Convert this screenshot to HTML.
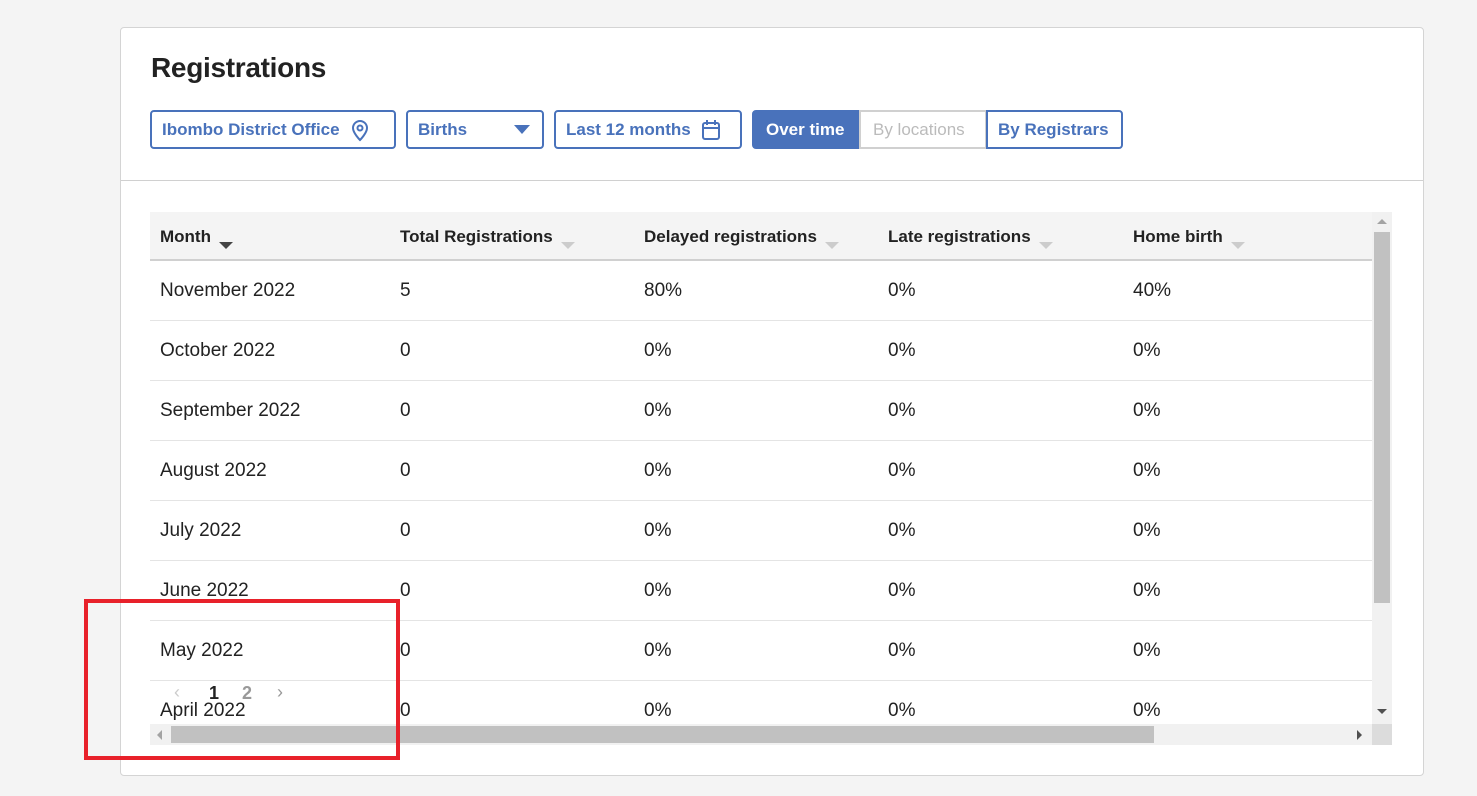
<!DOCTYPE html>
<html><head><style>
*{box-sizing:border-box;margin:0;padding:0}
body{width:1477px;height:796px;background:#f4f4f4;font-family:"Liberation Sans",sans-serif;color:#222;position:relative;overflow:hidden}
.card{position:absolute;left:120px;top:27px;width:1304px;height:749px;background:#fff;border:1px solid #d4d4d4;border-radius:4px}
h1{position:absolute;left:151px;top:52px;font-size:28px;font-weight:bold;color:#222;letter-spacing:-0.3px}
.btn{position:absolute;top:110px;height:39px;border:2px solid #4972bb;border-radius:4px;color:#4972bb;font-size:17px;font-weight:bold;display:flex;align-items:center;padding-left:10px}
.div{position:absolute;left:121px;top:180px;width:1302px;height:1px;background:#d0d0d0}
.tbl{position:absolute;left:150px;top:212px;width:1222px;height:512px;overflow:hidden}
.hdr{height:49px;background:#f4f4f4;border-bottom:2px solid #d0d0d0;position:relative}
.hdr span{position:absolute;top:15px;font-size:17px;font-weight:bold;color:#222}
.tri{display:inline-block;width:0;height:0;border-left:7px solid transparent;border-right:7px solid transparent;border-top:7px solid #ccc;margin-left:8px;vertical-align:middle}
.row{height:60px;border-bottom:1px solid #e4e4e4;position:relative}
.row span{position:absolute;top:19px;font-size:19px;color:#222}
</style></head><body>
<div class="card"></div>
<h1>Registrations</h1>
<div class="btn" style="left:150px;width:246px">Ibombo District Office
<svg width="22" height="24" viewBox="0 0 22 24" style="margin-left:9px"><path d="M11 22s7-7 7-12a7 7 0 0 0-14 0c0 5 7 12 7 12z" fill="none" stroke="#4972bb" stroke-width="2"/><circle cx="11" cy="10" r="2.5" fill="none" stroke="#4972bb" stroke-width="2"/></svg></div>
<div class="btn" style="left:406px;width:138px">Births<span style="position:absolute;right:12px;top:13px;width:0;height:0;border-left:8px solid transparent;border-right:8px solid transparent;border-top:9px solid #4972bb"></span></div>
<div class="btn" style="left:554px;width:188px">Last 12 months
<svg width="20" height="22" viewBox="0 0 20 22" style="margin-left:10px"><rect x="2" y="4" width="16" height="16" rx="2" fill="none" stroke="#4972bb" stroke-width="2"/><path d="M2 9h16M6 1v5M14 1v5" stroke="#4972bb" stroke-width="2"/></svg></div>
<div class="btn" style="left:752px;width:108px;background:#4972bb;color:#fff;border-radius:4px 0 0 4px;padding-left:12px">Over time</div>
<div class="btn" style="left:859px;width:128px;border-color:#d0d0d0;border-radius:0;color:#bbb;padding-left:12px;font-weight:normal">By locations</div>
<div class="btn" style="left:986px;width:137px;border-radius:0 4px 4px 0;padding-left:10px">By Registrars</div>
<div class="div"></div>
<div class="tbl">
<div class="hdr"><span style="left:10px">Month<span class="tri" style="border-top-color:#444"></span></span><span style="left:250px">Total Registrations<span class="tri"></span></span><span style="left:494px">Delayed registrations<span class="tri"></span></span><span style="left:738px">Late registrations<span class="tri"></span></span><span style="left:983px">Home birth<span class="tri"></span></span></div>
<div class="row"><span style="left:10px">November 2022</span><span style="left:250px">5</span><span style="left:494px">80%</span><span style="left:738px">0%</span><span style="left:983px">40%</span></div>
<div class="row"><span style="left:10px">October 2022</span><span style="left:250px">0</span><span style="left:494px">0%</span><span style="left:738px">0%</span><span style="left:983px">0%</span></div>
<div class="row"><span style="left:10px">September 2022</span><span style="left:250px">0</span><span style="left:494px">0%</span><span style="left:738px">0%</span><span style="left:983px">0%</span></div>
<div class="row"><span style="left:10px">August 2022</span><span style="left:250px">0</span><span style="left:494px">0%</span><span style="left:738px">0%</span><span style="left:983px">0%</span></div>
<div class="row"><span style="left:10px">July 2022</span><span style="left:250px">0</span><span style="left:494px">0%</span><span style="left:738px">0%</span><span style="left:983px">0%</span></div>
<div class="row"><span style="left:10px">June 2022</span><span style="left:250px">0</span><span style="left:494px">0%</span><span style="left:738px">0%</span><span style="left:983px">0%</span></div>
<div class="row"><span style="left:10px">May 2022</span><span style="left:250px">0</span><span style="left:494px">0%</span><span style="left:738px">0%</span><span style="left:983px">0%</span></div>
<div class="row"><span style="left:10px">April 2022</span><span style="left:250px">0</span><span style="left:494px">0%</span><span style="left:738px">0%</span><span style="left:983px">0%</span></div>
</div>
<!-- scrollbars -->
<div style="position:absolute;left:1372px;top:212px;width:20px;height:512px;background:#f1f1f1"></div>
<div style="position:absolute;left:1374px;top:232px;width:16px;height:371px;background:#c1c1c1"></div>
<div style="position:absolute;left:1377px;top:219px;border-left:5px solid transparent;border-right:5px solid transparent;border-bottom:5px solid #a3a3a3"></div>
<div style="position:absolute;left:1377px;top:709px;border-left:5px solid transparent;border-right:5px solid transparent;border-top:5px solid #505050"></div>
<div style="position:absolute;left:150px;top:724px;width:1222px;height:21px;background:#f1f1f1"></div>
<div style="position:absolute;left:1372px;top:724px;width:20px;height:21px;background:#dcdcdc"></div>
<div style="position:absolute;left:171px;top:726px;width:983px;height:17px;background:#c1c1c1"></div>
<div style="position:absolute;left:157px;top:730px;border-top:5px solid transparent;border-bottom:5px solid transparent;border-right:5px solid #a3a3a3"></div>
<div style="position:absolute;left:1357px;top:730px;border-top:5px solid transparent;border-bottom:5px solid transparent;border-left:5px solid #505050"></div>
<!-- pagination -->
<div style="position:absolute;left:174px;top:682px;font-size:18px;color:#ccc">&#8249;</div>
<div style="position:absolute;left:209px;top:683px;font-size:18px;font-weight:bold;color:#222">1</div>
<div style="position:absolute;left:242px;top:683px;font-size:18px;font-weight:bold;color:#999">2</div>
<div style="position:absolute;left:277px;top:682px;font-size:18px;color:#999">&#8250;</div>
<!-- red box -->
<div style="position:absolute;left:84px;top:599px;width:316px;height:161px;border:4px solid #e8212a"></div>
</body></html>
